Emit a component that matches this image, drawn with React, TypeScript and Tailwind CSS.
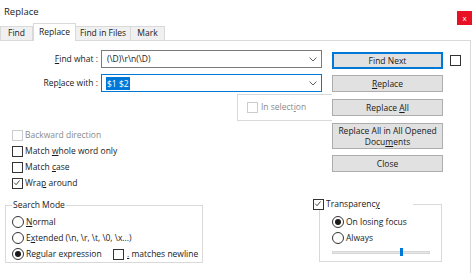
import React from 'react'

const font = { fontFamily: '"Open Sans", "Noto Sans", sans-serif' }

function Check({ checked = false, disabled = false }: { checked?: boolean; disabled?: boolean }) {
  return (
    <span
      className={`relative inline-block w-[11px] h-[11px] shrink-0 border bg-white ${
        disabled ? 'border-[#cccccc]' : 'border-[#333333]'
      }`}
    >
      {checked && (
        <svg viewBox="0 0 11 11" className="absolute inset-0 w-[9px] h-[9px]">
          <path d="M1.5 4.5 L3.8 7 L8 1.8" fill="none" stroke="#333" strokeWidth="1.1" />
        </svg>
      )}
    </span>
  )
}

function Radio({ on = false }: { on?: boolean }) {
  return (
    <span className="inline-flex items-center justify-center w-[12px] h-[12px] shrink-0 rounded-full border border-[#333333] bg-white">
      {on && <span className="w-[6px] h-[6px] rounded-full bg-[#1a1a1a]" />}
    </span>
  )
}

function Chevron() {
  return (
    <svg viewBox="0 0 8 5" className="w-[8px] h-[5px] ml-auto mr-[4px]">
      <path d="M0.5 0.5 L4 4 L7.5 0.5" fill="none" stroke="#606060" strokeWidth="1" />
    </svg>
  )
}

function Btn({ children, def = false, tall = false }: { children: React.ReactNode; def?: boolean; tall?: boolean }) {
  return (
    <div
      className={`w-[111px] flex items-center justify-center text-center leading-[11px] bg-[#e1e1e1] border ${
        def ? 'border-[#0078d7] border-2' : 'border-[#adadad]'
      } ${tall ? 'h-[26px]' : 'h-[17px]'}`}
    >
      {children}
    </div>
  )
}

export default function App() {
  return (
    <div className="relative w-[474px] h-[273px] bg-white overflow-hidden text-[8.5px] text-[#1a1a1a]" style={font}>
      {/* Title bar */}
      <div className="h-[23px] flex items-start pt-[5px] pl-[4px] text-[9.5px]">Replace</div>
      <div className="absolute top-[11px] left-[457px] w-[15px] h-[14px] bg-[#e81123] flex items-center justify-center text-white text-[8px] leading-none">
        x
      </div>

      {/* Tabs */}
      <div className="flex items-end h-[17px]">
        <div className="w-[33px] h-[14px] flex items-center justify-center bg-[#f0f0f0] border border-b-0 border-[#d9d9d9]">Find</div>
        <div className="relative z-10 w-[43px] h-[18px] -mb-px flex items-center justify-center bg-white border border-b-0 border-[#d9d9d9]">
          Replace
        </div>
        <div className="w-[55px] h-[14px] flex items-center justify-center bg-[#f0f0f0] border border-b-0 border-l-0 border-[#d9d9d9]">
          Find in Files
        </div>
        <div className="w-[34px] h-[14px] flex items-center justify-center bg-[#f0f0f0] border border-b-0 border-l-0 border-[#d9d9d9]">
          Mark
        </div>
      </div>

      {/* Panel */}
      <div className="w-[471px] h-[233px] border-t border-r border-[#d9d9d9]">
        <div className="flex">
          {/* Left column */}
          <div className="w-[332px] h-[150px]">
            <div className="mt-[9px] flex items-center h-[18px]">
              <div className="w-[101px] pr-[3px] text-right">
                <span className="underline">F</span>ind what :
              </div>
              <div className="w-[221px] h-[18px] flex items-center pl-[5px] border border-[#7a7a7a]">
                <span>(\D)\r\n(\D)</span>
                <Chevron />
              </div>
            </div>
            <div className="mt-[6px] flex items-center h-[18px]">
              <div className="w-[101px] pr-[3px] text-right">
                Rep<span className="underline">l</span>ace with :
              </div>
              <div className="w-[221px] h-[18px] flex items-center pl-[4px] border border-[#0078d7]">
                <span className="bg-[#0078d7] text-white px-[1px] leading-[13px]">$1 $2</span>
                <Chevron />
              </div>
            </div>
            <div className="mt-[2px] ml-[237px] w-[95px] h-[27px] border border-r-0 border-[#d9d9d9] flex items-center pl-[9px] gap-[3px] text-[#8a8a8a]">
              <Check disabled />
              <span>
                In select<span className="underline">i</span>on
              </span>
            </div>
            <div className="mt-[6px] pl-[12px]">
              <div className="h-[16px] flex items-center gap-[2px] text-[#8a8a8a]">
                <Check disabled />
                <span>Backward direction</span>
              </div>
              <div className="h-[16px] flex items-center gap-[2px]">
                <Check />
                <span>
                  Match <span className="underline">w</span>hole word only
                </span>
              </div>
              <div className="h-[16px] flex items-center gap-[2px]">
                <Check />
                <span>
                  Match <span className="underline">c</span>ase
                </span>
              </div>
              <div className="h-[16px] flex items-center gap-[2px]">
                <Check checked />
                <span>
                  Wra<span className="underline">p</span> around
                </span>
              </div>
            </div>
          </div>

          {/* Right column */}
          <div className="pt-[11px]">
            <div className="flex items-center gap-[7px]">
              <Btn def>Find Next</Btn>
              <Check />
            </div>
            <div className="mt-[6px]">
              <Btn>
                <span>
                  <span className="underline">R</span>eplace
                </span>
              </Btn>
            </div>
            <div className="mt-[7px]">
              <Btn>
                <span>
                  Replace <span className="underline">A</span>ll
                </span>
              </Btn>
            </div>
            <div className="mt-[7px]">
              <Btn tall>
                <span>
                  Replace All in All Opened
                  <br />
                  Docu<span className="underline">m</span>ents
                </span>
              </Btn>
            </div>
            <div className="mt-[6px]">
              <Btn>Close</Btn>
            </div>
          </div>
        </div>

        {/* Bottom row */}
        <div className="flex">
          <div className="relative mt-[14px] ml-[5px] w-[198px] h-[58px] border border-[#d9d9d9] pt-[8px] pl-[6px]">
            <div className="absolute -top-[7px] left-[6px] bg-white px-[1px] leading-[12px]">Search Mode</div>
            <div className="h-[16px] flex items-center gap-[2px]">
              <Radio />
              <span>
                <span className="underline">N</span>ormal
              </span>
            </div>
            <div className="h-[16px] flex items-center gap-[2px]">
              <Radio />
              <span>
                E<span className="underline">x</span>tended (\n, \r, \t, \0, \x...)
              </span>
            </div>
            <div className="h-[16px] flex items-center gap-[2px]">
              <Radio on />
              <span className="w-[85px]">Regular expression</span>
              <Check />
              <span className="ml-[1px]">
                <span className="underline">.</span> matches newline
              </span>
            </div>
          </div>

          <div className="relative mt-[13px] ml-[116px] w-[123px] h-[58px] border border-[#d9d9d9] pt-[9px] pl-[12px]">
            <div className="absolute -top-[7px] -left-[7px] w-[100px] bg-white flex items-center gap-[2px] leading-[12px]">
              <Check checked />
              <span>
                Transparenc<span className="underline">y</span>
              </span>
            </div>
            <div className="h-[16px] flex items-center gap-[2px]">
              <Radio on />
              <span>On losing focus</span>
            </div>
            <div className="h-[16px] flex items-center gap-[2px]">
              <Radio />
              <span>Always</span>
            </div>
            <div className="relative h-[12px] w-[98px] flex items-center">
              <div className="w-full h-[3px] bg-[#e7e7e7] border border-[#d6d6d6]" />
              <div className="absolute left-[68px] top-[2px] w-[3px] h-[8px] bg-[#0078d7]" />
            </div>
          </div>
        </div>
      </div>
    </div>
  )
}
